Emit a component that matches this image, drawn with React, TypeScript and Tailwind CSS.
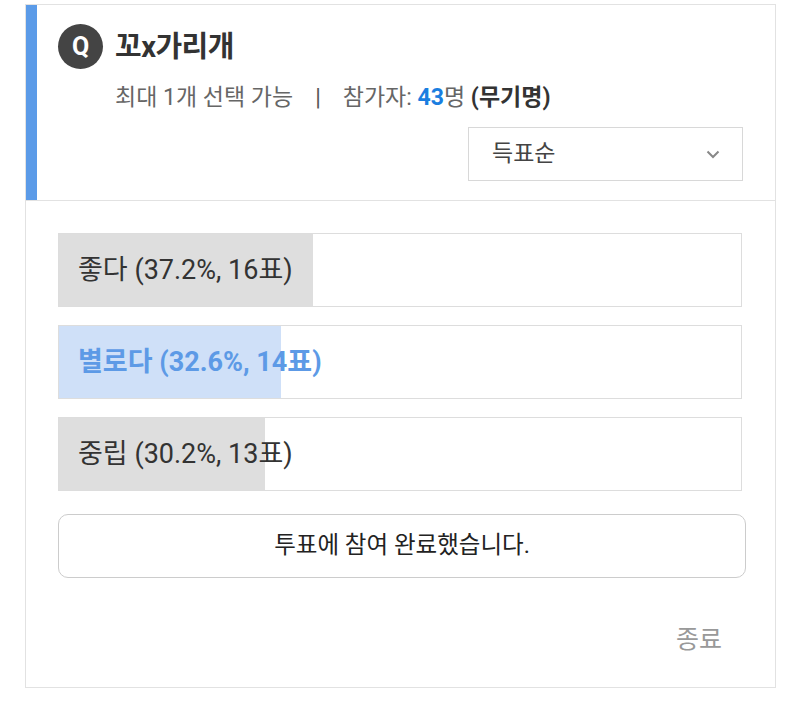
const options = [
  { label: '좋다', pct: 37.2, votes: 16, mine: false },
  { label: '별로다', pct: 32.6, votes: 14, mine: true },
  { label: '중립', pct: 30.2, votes: 13, mine: false },
]

export default function App() {
  return (
    <div
      className="w-[800px] h-[710px] bg-white pt-[4px] pl-[25px]"
      style={{ fontFamily: "Roboto, 'Noto Sans CJK KR', sans-serif" }}
    >
      <div className="w-[751px] h-[684px] border border-[#e2e2e2] flex flex-col">
        {/* Header */}
        <div className="flex h-[196px] border-b border-[#e2e2e2]">
          <div className="w-[11px] bg-[#5b9be8] shrink-0" />
          <div className="flex-1 pl-[21px] pr-[32px] pt-[19px]">
            <div className="flex items-center gap-[12px]">
              <div className="w-[45px] h-[45px] rounded-full bg-[#444444] flex items-center justify-center text-white text-[25px] font-bold">
                Q
              </div>
              <h1 className="text-[29px] leading-[40px] font-bold text-[#333333] tracking-[-0.5px]">꼬x가리개</h1>
            </div>
            <p className="pl-[57px] mt-[12px] text-[23px] leading-[33px] text-[#666666]">
              최대 1개 선택 가능
              <span className="mx-[22px] text-[#555555]">|</span>
              참가자: <span className="text-[#1a7ee0] font-bold">43</span>명{' '}
              <span className="font-bold text-[#333333]">(무기명)</span>
            </p>
            <div className="flex justify-end mt-[13px]">
              <div className="w-[275px] h-[54px] border border-[#d8d8d8] flex items-center justify-between pl-[23px] pr-[22px]">
                <span className="text-[23px] text-[#444444]">득표순</span>
                <svg width="14" height="9" viewBox="0 0 14 9" fill="none">
                  <path d="M1.5 1.5 7 7l5.5-5.5" stroke="#888888" strokeWidth="2" />
                </svg>
              </div>
            </div>
          </div>
        </div>

        {/* Results */}
        <div className="flex-1 pl-[32px] pr-[29px] pt-[32px] flex flex-col">
          <div className="flex flex-col gap-[18px] pr-[4px]">
            {options.map((o) => (
              <div key={o.label} className="relative h-[74px] border border-[#dddddd] flex items-center">
                <div
                  className={`absolute left-0 top-0 bottom-0 ${o.mine ? 'bg-[#cfe0f8]' : 'bg-[#dedede]'}`}
                  style={{ width: `${o.pct}%` }}
                />
                <span
                  className={`relative pl-[19px] text-[27px] ${o.mine ? 'text-[#5d9ae6] font-bold' : 'text-[#333333]'}`}
                >
                  {o.label} ({o.pct}%, {o.votes}표)
                </span>
              </div>
            ))}
          </div>
          <button className="mt-[23px] h-[64px] w-full border border-[#cccccc] rounded-[10px] text-[23.5px] text-[#222222]">
            투표에 참여 완료했습니다.
          </button>
          <div className="flex justify-end mt-[42px] pr-[24px]">
            <span className="text-[25px] leading-[39px] text-[#999999]">종료</span>
          </div>
        </div>
      </div>
    </div>
  )
}
